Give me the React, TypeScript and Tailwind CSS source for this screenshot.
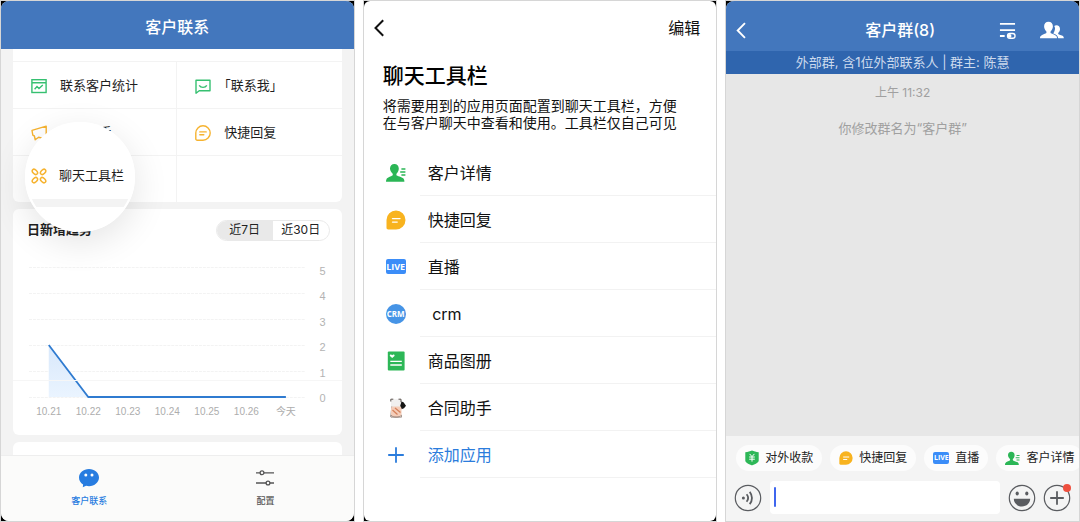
import type { ReactNode } from 'react'
import clsx from 'clsx'

interface IconProps {
    className?: string
}

const StatsIcon = ({ className }: IconProps) => (
    <svg viewBox="0 0 16 16" fill="none" stroke="currentColor" strokeWidth="1.4" className={className}>
        <rect x="0.9" y="1.7" width="14.2" height="12.8" />
        <path d="M1 4.8h14" />
        <path d="M3.6 11.2l2.4-2.6 2 1.9 3.8-3.4" />
    </svg>
)

const ContactIcon = ({ className }: IconProps) => (
    <svg viewBox="0 0 16 16" fill="none" stroke="currentColor" strokeWidth="1.4" className={className}>
        <path d="M1 15.2V2.2h14v10.6H4.2z" strokeLinejoin="round" />
        <path d="M4.2 7.4c1.6 2.6 6 2.6 7.6 0" />
    </svg>
)

const MegaphoneIcon = ({ className }: IconProps) => (
    <svg viewBox="0 0 16 16" fill="none" stroke="currentColor" strokeWidth="1.4" strokeLinejoin="round" className={className}>
        <path d="M1 5.4L15.2 1.200v13L7.600 12.300 4.200 14.800 3.400 11 1.800 10.200z" />
    </svg>
)

const ReplyIcon = ({ className }: IconProps) => (
    <svg viewBox="0 0 16 16" fill="none" stroke="currentColor" strokeWidth="1.4" className={className}>
        <path d="M8 .8a7.2 7.2 0 1 1 0 14.4H2.2c-.8 0-1.4-.5-1.4-1.3V8A7.2 7.2 0 0 1 8 .8z" />
        <path d="M4.8 6.9h6.4M4.8 9.7h4" strokeLinecap="round" />
    </svg>
)

const PetalsIcon = ({ className }: IconProps) => (
    <svg viewBox="0 0 16 16" fill="none" stroke="currentColor" strokeWidth="1.5" className={className}>
        <ellipse cx="3.9" cy="3.9" rx="3.100" ry="2" transform="rotate(45 3.9 3.9)" />
        <ellipse cx="12.1" cy="3.9" rx="3.100" ry="2" transform="rotate(-45 12.1 3.9)" />
        <ellipse cx="3.9" cy="12.1" rx="3.100" ry="2" transform="rotate(-45 3.9 12.1)" />
        <ellipse cx="12.1" cy="12.1" rx="3.100" ry="2" transform="rotate(45 12.1 12.1)" />
    </svg>
)

const BubbleIcon = ({ className }: IconProps) => (
    <svg viewBox="0 0 20 20" className={className}>
        <path
            d="M10 1c5.600 0 10 3.800 10 8.600s-4.400 8.600-10 8.600c-1 0-2-.1-2.900-.4L3.800 19.300l.3-2.700C1.600 15 0 12.600 0 9.600 0 4.800 4.400 1 10 1z"
            fill="currentColor"
        />
        <circle cx="6.8" cy="7" r="1.5" fill="#fff" />
        <circle cx="13" cy="7" r="1.5" fill="#fff" />
    </svg>
)

const SlidersIcon = ({ className }: IconProps) => (
    <svg viewBox="0 0 20 20" fill="none" stroke="currentColor" strokeWidth="1.3" className={className}>
        <path d="M1 4.800h4.200M8.800 4.800H19M1 15h10.200M14.800 15H19" />
        <circle cx="7" cy="4.800" r="1.900" />
        <circle cx="13" cy="15" r="1.900" />
    </svg>
)

const ChevronIcon = ({ className }: IconProps) => (
    <svg viewBox="0 0 10 18" fill="none" stroke="currentColor" strokeWidth="2" className={className}>
        <path d="M9.200 1.200L1.500 9l7.700 7.800" />
    </svg>
)

const PersonIcon = ({ className }: IconProps) => (
    <svg viewBox="0 0 20 20" className={className}>
        <path
            d="M8.400 1c2.700 0 4.400 1.900 4.400 4.500 0 2-.9 3.900-2.100 4.900-.4.400-.4 1.900.1 2.200 1.400.8 6.400 1.800 7.200 3.800.3.700.4 1.500.4 2.300H0c0-.8.100-1.600.4-2.300.8-2 4.800-3 6-3.800.5-.3.500-1.800.1-2.200C5.300 9.400 4 7.500 4 5.500 4 2.900 5.700 1 8.400 1z"
            fill="#2bb656"
        />
        <path d="M15.400 6h4M14.200 9h5.200M15.400 12h4" stroke="#2bb656" strokeWidth="1.300" />
    </svg>
)

const ReplySolidIcon = ({ className }: IconProps) => (
    <svg viewBox="0 0 20 20" className={className}>
        <path d="M10 .5a9.500 9.500 0 1 1 0 19H2.200C1.200 19.500.5 18.800.5 17.800V10A9.500 9.500 0 0 1 10 .5z" fill="#f8b31f" />
        <path d="M6.500 8.600h7.500M6.500 12.100h4.700" stroke="#fff" strokeWidth="1.400" strokeLinecap="round" />
    </svg>
)

const AlbumIcon = ({ className }: IconProps) => (
    <svg viewBox="0 0 20 20" className={className}>
        <rect x="1.800" y=".5" width="16.800" height="19" rx="1" fill="#2db757" />
        <path d="M6.200 7.100L3.900 4.900c-.6-1.300 1.400-2 2.300-.7.900-1.300 2.900-.6 2.300.7z" fill="#fff" />
        <path d="M4.300 10.400h11.500M4.300 14h11.500" stroke="#fff" strokeWidth="1.400" />
    </svg>
)

const ContractIcon = ({ className }: IconProps) => (
    <svg viewBox="0 0 20 20" className={className}>
        <rect x="5" y="1.200" width="10" height="8" rx="1" fill="#f1f0ef" />
        <path d="M4.800 3.500V1.200h2.500M12.500 1.200H15v3" fill="none" stroke="#5b534e" strokeWidth="1" />
        <path d="M15.500 3.500l2 .8 2.500 3.500-2 2.500-2.600 1-1.200-3.500z" fill="#151515" />
        <path d="M5.800 8.500L4.800 18.800" fill="none" stroke="#74665e" strokeWidth=".8" />
        <rect x="5" y="8.500" width="10.500" height="10.500" rx="2" fill="#f4cdb9" />
        <path d="M6.500 12l5 4.500M9 10l5.500 4.500" stroke="#d5825c" strokeWidth="1.300" />
        <path d="M5 17.200c2 2.600 8.500 2.600 10.500 0v2H5z" fill="#fff" stroke="#867167" strokeWidth=".7" />
    </svg>
)

const PlusIcon = ({ className }: IconProps) => (
    <svg viewBox="0 0 20 20" fill="none" stroke="#2b7cdc" strokeWidth="1.800" className={className}>
        <path d="M10 2.200v15.600M2.200 10h15.600" />
    </svg>
)

const ShieldIcon = ({ className }: IconProps) => (
    <svg viewBox="0 0 14 16" className={className}>
        <path d="M.3 2.200C2.800 2 5.300 1.300 7 .5c1.700.8 4.200 1.500 6.700 1.700v8.600c0 2.200-5.200 3.900-6.700 4.700-1.500-.8-6.700-2.500-6.700-4.700z" fill="#2db757" />
        <path d="M4.600 3.900L7 6.600l2.400-2.700M4.200 7h5.600M4.200 9.200h5.600M7 6.600v5" fill="none" stroke="#fff" strokeWidth="1" />
    </svg>
)

const ToolbarIcon = ({ className }: IconProps) => (
    <svg viewBox="0 0 18 18" fill="none" stroke="currentColor" strokeWidth="1.900" className={className}>
        <path d="M1 2h16M1 8.500h16M1 14.800h5" />
        <rect x="9" y="12.200" width="8" height="5" rx="2.500" strokeWidth="1.400" />
        <circle cx="11.200" cy="14.700" r="2" fill="currentColor" stroke="none" />
    </svg>
)

const GroupIcon = ({ className }: IconProps) => (
    <svg viewBox="0 0 24 18" fill="currentColor" className={className}>
        <path d="M8.500.8c2.700 0 4.400 1.800 4.400 4.500 0 2.100-.9 3.900-2.100 4.900-.4.400-.4 1.700.1 2 1.300.8 5 1.600 5.800 3.400.2.500.3 1 .3 1.700H0c0-.7.1-1.200.3-1.700.8-1.800 4.500-2.600 5.800-3.400.5-.3.500-1.600.1-2C5 9.200 4.100 7.400 4.100 5.300 4.100 2.600 5.800.8 8.500.8z" />
        <path d="M14.200 5c.6-.5 1.400-.7 2.200-.7 2.200 0 3.600 1.500 3.600 3.700 0 1.600-.7 2.900-1.600 3.800-.3.300-.3 1.200.1 1.500 1 .6 4.300 1 5 2.500.2.400.3.900.3 1.500h-5.600c-.1-2.700-2.200-3.800-4.900-4.900.9-1.600 1.700-3.100 1.700-5.200 0-.8-.3-1.500-.8-2.200z" />
    </svg>
)

const VoiceIcon = ({ className }: IconProps) => (
    <svg viewBox="0 0 28 28" fill="none" stroke="currentColor" strokeWidth="1.800" className={className}>
        <circle cx="14" cy="14" r="12.700" strokeWidth="1.200" />
        <circle cx="9.400" cy="14" r="1.500" fill="currentColor" stroke="none" />
        <path d="M12.600 10.200c1.800 2.200 1.800 5.400 0 7.600M15.700 7.800c3 3.600 3 8.800 0 12.400" />
    </svg>
)

const SmileIcon = ({ className }: IconProps) => (
    <svg viewBox="0 0 28 28" className={className}>
        <circle cx="14" cy="14" r="12.700" fill="none" stroke="currentColor" strokeWidth="1.200" />
        <ellipse cx="9.200" cy="9.500" rx="1.600" ry="2" fill="currentColor" />
        <ellipse cx="18.800" cy="9.500" rx="1.600" ry="2" fill="currentColor" />
        <path d="M5.800 14.800h16.400c0 4.400-3.600 7.700-8.200 7.700s-8.200-3.300-8.200-7.700z" fill="currentColor" />
    </svg>
)

const MoreIcon = ({ className }: IconProps) => (
    <svg viewBox="0 0 28 28" fill="none" stroke="currentColor" strokeWidth="1.800" className={className}>
        <circle cx="14" cy="14" r="12.700" strokeWidth="1.200" />
        <path d="M14 7.200v13.600M7.200 14h13.600" />
    </svg>
)

const LiveBadge = ({ small }: { small?: boolean }) => (
    <span
        className={clsx(
            "flex shrink-0 items-center justify-center rounded-xs bg-[#3b8df8] font-['Open_Sans',sans-serif] font-bold text-white",
            small ? 'h-3 w-4 text-[7px]' : 'h-[15px] w-5 text-[9px]'
        )}
    >
        LIVE
    </span>
)

const CrmBadge = () => (
    <span className="flex size-5 items-center justify-center rounded-full bg-[#4694e6] font-['Open_Sans',sans-serif] text-[8px] font-bold text-white">
        CRM
    </span>
)

const entries = [
    { label: '联系客户统计', icon: StatsIcon, color: 'text-[#36c071]' },
    { label: '「联系我」', icon: ContactIcon, color: 'text-[#36c071]' },
    { label: '群发助手', icon: MegaphoneIcon, color: 'text-[#f6b330]' },
    { label: '快捷回复', icon: ReplyIcon, color: 'text-[#f6b330]' },
]

const days = ['10.21', '10.22', '10.23', '10.24', '10.25', '10.26', '今天']
const counts = [2, 0, 0, 0, 0, 0, 0]
const levels = [5, 4, 3, 2, 1, 0]

const apps: { label: string; icon: ReactNode; link?: boolean }[] = [
    { label: '客户详情', icon: <PersonIcon className="size-5" /> },
    { label: '快捷回复', icon: <ReplySolidIcon className="size-5" /> },
    { label: '直播', icon: <LiveBadge /> },
    { label: '\u00a0crm', icon: <CrmBadge /> },
    { label: '商品图册', icon: <AlbumIcon className="size-5" /> },
    { label: '合同助手', icon: <ContractIcon className="size-5" /> },
    { label: '添加应用', icon: <PlusIcon className="size-5" />, link: true },
]

const chips = [
    { label: '对外收款', icon: <ShieldIcon className="h-4 w-[14px]" /> },
    { label: '快捷回复', icon: <ReplySolidIcon className="size-[14px]" /> },
    { label: '直播', icon: <LiveBadge small /> },
    { label: '客户详情', icon: <PersonIcon className="size-[15px]" /> },
]

function TrendChart() {
    const x = (i: number) => 20 + i * 40
    const y = (v: number) => 134 - v * 26
    const line = counts.map((c, i) => `${x(i)},${y(c)}`).join(' ')

    return (
        <svg viewBox="0 0 280 141" preserveAspectRatio="none" className="h-[141px] min-w-0 flex-1">
            <defs>
                <linearGradient id="area" x1="0" y1="0" x2="0" y2="1">
                    <stop offset="0" stopColor="#d8e8fb" />
                    <stop offset="1" stopColor="#eaf4ff" />
                </linearGradient>
            </defs>
            {levels.map((v) => (
                <path key={v} d={`M0 ${y(v) + 0.5}h280`} stroke="#f3f3f3" strokeDasharray="3 1" />
            ))}
            <polygon points={`${x(0)},${y(0)} ${line}`} fill="url(#area)" />
            <polyline points={line} fill="none" stroke="#2f7bd0" strokeWidth="1.800" />
        </svg>
    )
}

function Dashboard() {
    return (
        <section className="flex min-h-0 flex-col border border-[#d6d6d6] bg-black">
            <div className="flex min-h-0 flex-1 flex-col overflow-hidden rounded-lg bg-[#f3f3f3]">
                <header className="flex h-12 shrink-0 items-center justify-center bg-[#4377bd] pt-1">
                    <h1 className="text-base font-medium text-white">客户联系</h1>
                </header>

                <div className="relative flex min-h-0 flex-1 flex-col gap-[7px] overflow-hidden px-3">
                    <div className="shrink-0 rounded-b-md bg-white pt-3">
                        <div className="grid grid-cols-2">
                            {entries.map((entry) => {
                                const Icon = entry.icon
                                return (
                                    <button
                                        key={entry.label}
                                        className="flex h-[47px] items-center gap-[13px] border-t border-[#f3f3f3] pt-px pl-[18px] text-[13px] text-[#1f1f1f] odd:border-r"
                                    >
                                        <Icon className={clsx('size-4', entry.color)} />
                                        <span className="[font-feature-settings:'halt']">{entry.label}</span>
                                    </button>
                                )
                            })}
                            <div className="h-[47px] border-t border-r border-[#f3f3f3]" />
                            <div className="h-[47px] border-t border-[#f3f3f3]" />
                        </div>
                    </div>

                    <div className="relative shrink-0 rounded-md bg-white pt-[11px] pb-4">
                        <div className="flex h-5 items-center justify-between pr-3 pl-[14px]">
                            <h2 className="text-[13px] font-bold text-[#1f1f1f]">日新增趋势</h2>
                            <div className="flex h-[21px] overflow-hidden rounded-full border border-[#e9e9e9] text-xs text-[#222]">
                                <button className="w-14 bg-[#e9e9e9]">近7日</button>
                                <button className="w-14">近30日</button>
                            </div>
                        </div>
                        <div className="mt-[23px] flex pr-4 pl-4">
                            <TrendChart />
                            <div className="flex w-5 flex-col items-end justify-between pt-[2px] font-['Liberation_Sans',sans-serif] text-[11px] leading-3 text-[#b3b3b3]">
                                {levels.map((v) => (
                                    <span key={v}>{v}</span>
                                ))}
                            </div>
                        </div>
                        <div className="grid grid-cols-7 pr-9 pl-4 text-center font-['Liberation_Sans','Noto_Sans_CJK_SC',sans-serif] text-[10px] leading-[15px] text-[#adadad]">
                            {days.map((d) => (
                                <span key={d}>{d}</span>
                            ))}
                        </div>
                        <div className="absolute inset-x-0 bottom-[54px] border-t border-[#f6f6f6]" />
                    </div>

                    <div className="h-10 shrink-0 rounded-md bg-white" />

                    {/* Magnifier over the toolbar entry */}
                    <div className="absolute top-[73px] left-6 size-[110px] rounded-full shadow-[0_10px_36px_rgba(0,0,0,0.11)]">
                        <div className="size-full overflow-hidden rounded-full border-2 border-white bg-white">
                            <button className="mt-7 flex h-[47px] items-center gap-3 pl-1 text-[13px] whitespace-nowrap text-[#1f1f1f]">
                                <PetalsIcon className="size-4 shrink-0 text-[#f6b330]" />
                                聊天工具栏
                            </button>
                            <div className="h-2 bg-[#f3f3f3]" />
                        </div>
                    </div>
                </div>

                <nav className="grid h-[66px] shrink-0 grid-cols-2 border-t border-[#eee] bg-[#fbfbfa] text-[9px] leading-3 font-medium">
                    <button className="flex flex-col items-center gap-[7px] pt-3 text-[#277ce0]">
                        <BubbleIcon className="size-5" />
                        客户联系
                    </button>
                    <button className="flex flex-col items-center gap-[7px] pt-3 text-[#555]">
                        <SlidersIcon className="size-5" />
                        配置
                    </button>
                </nav>
            </div>
        </section>
    )
}

function ToolbarSettings() {
    return (
        <section className="flex min-h-0 flex-col border border-[#d6d6d6] bg-black">
            <div className="min-h-0 flex-1 overflow-hidden rounded-md bg-white text-[#111]">
                <header className="flex h-[54px] items-center justify-between pr-4 pl-[10px]">
                    <button aria-label="返回">
                        <ChevronIcon className="h-[18px] w-[10px]" />
                    </button>
                    <button className="text-base">编辑</button>
                </header>
                <div className="mt-[7px] pl-[19px]">
                    <h1 className="text-[21px] leading-7 font-medium text-black">聊天工具栏</h1>
                    <p className="mt-[7px] text-sm leading-[17px] whitespace-nowrap">
                        将需要用到的应用页面配置到聊天工具栏，方便
                        <br />
                        在与客户聊天中查看和使用。工具栏仅自己可见
                    </p>
                </div>
                <ul className="mt-[18px]">
                    {apps.map((app) => (
                        <li key={app.label}>
                            <button className="flex h-[47px] w-full items-center gap-[14px] pl-[22px]">
                                {app.icon}
                                <span
                                    className={clsx(
                                        'flex h-full flex-1 items-center border-b border-[#f2f2f2] pt-[2px] pl-2 text-base',
                                        app.link && 'text-[#2b7cdc]'
                                    )}
                                >
                                    {app.label}
                                </span>
                            </button>
                        </li>
                    ))}
                </ul>
            </div>
        </section>
    )
}

function GroupChat() {
    return (
        <section className="flex min-h-0 min-w-0 flex-col border border-[#d6d6d6] bg-black">
            <div className="flex min-h-0 min-w-0 flex-1 flex-col overflow-hidden rounded-t-lg bg-[#e7e7e7]">
                <header className="grid h-[50px] shrink-0 grid-cols-[1fr_auto_1fr] items-center bg-[#4377bd] pt-2 pr-[15px] pl-[10px] text-white">
                    <button aria-label="返回" className="justify-self-start">
                        <ChevronIcon className="h-[17px] w-[10px]" />
                    </button>
                    <h1 className="text-base font-medium">客户群(8)</h1>
                    <div className="flex items-center gap-6 justify-self-end">
                        <button aria-label="工具栏">
                            <ToolbarIcon className="size-[17px]" />
                        </button>
                        <button aria-label="群成员">
                            <GroupIcon className="h-[18px] w-6" />
                        </button>
                    </div>
                </header>
                <p className="bg-[#2f65ae] text-center text-[13px] leading-[23px] text-[#ccdaed]">外部群, 含1位外部联系人 | 群主: 陈慧</p>

                <div className="flex flex-1 flex-col items-center gap-[18px] pt-[11px] text-[#a0a0a0]">
                    <time className="text-xs">上午 11:32</time>
                    <p className="text-[13px]">你修改群名为“客户群”</p>
                </div>

                <footer className="bg-[#f4f4f4] pt-[9px] pb-[7px] text-[#5a5c60]">
                    <div className="flex gap-2 overflow-hidden pl-[10px]">
                        {chips.map((chip) => (
                            <button
                                key={chip.label}
                                className="flex h-[26px] shrink-0 items-center gap-[6px] rounded-full bg-[#fcfcfc] px-[9px] text-xs text-[#222]"
                            >
                                {chip.icon}
                                {chip.label}
                            </button>
                        ))}
                    </div>
                    <div className="mt-[10px] flex items-center gap-2 pr-2 pl-2">
                        <button aria-label="语音">
                            <VoiceIcon className="size-7" />
                        </button>
                        <div className="relative min-w-0 flex-1">
                            <input aria-label="消息" className="block h-[33px] w-full rounded-sm bg-white pl-2 text-sm outline-none" />
                            <span className="absolute top-[6px] left-1 h-5 w-[2px] rounded-full bg-[#3f66ee]" />
                        </div>
                        <div className="flex gap-[7px]">
                            <button aria-label="表情">
                                <SmileIcon className="size-7" />
                            </button>
                            <button aria-label="更多" className="relative">
                                <MoreIcon className="size-7" />
                                <span className="absolute top-0 right-0 size-2 rounded-full bg-[#ee4f3e]" />
                            </button>
                        </div>
                    </div>
                </footer>
            </div>
        </section>
    )
}

export default function App() {
    return (
        <main className="grid h-screen grid-cols-3 grid-rows-1 gap-2 bg-white font-['Inter','Noto_Sans_CJK_SC',sans-serif]">
            <Dashboard />
            <ToolbarSettings />
            <GroupChat />
        </main>
    )
}
